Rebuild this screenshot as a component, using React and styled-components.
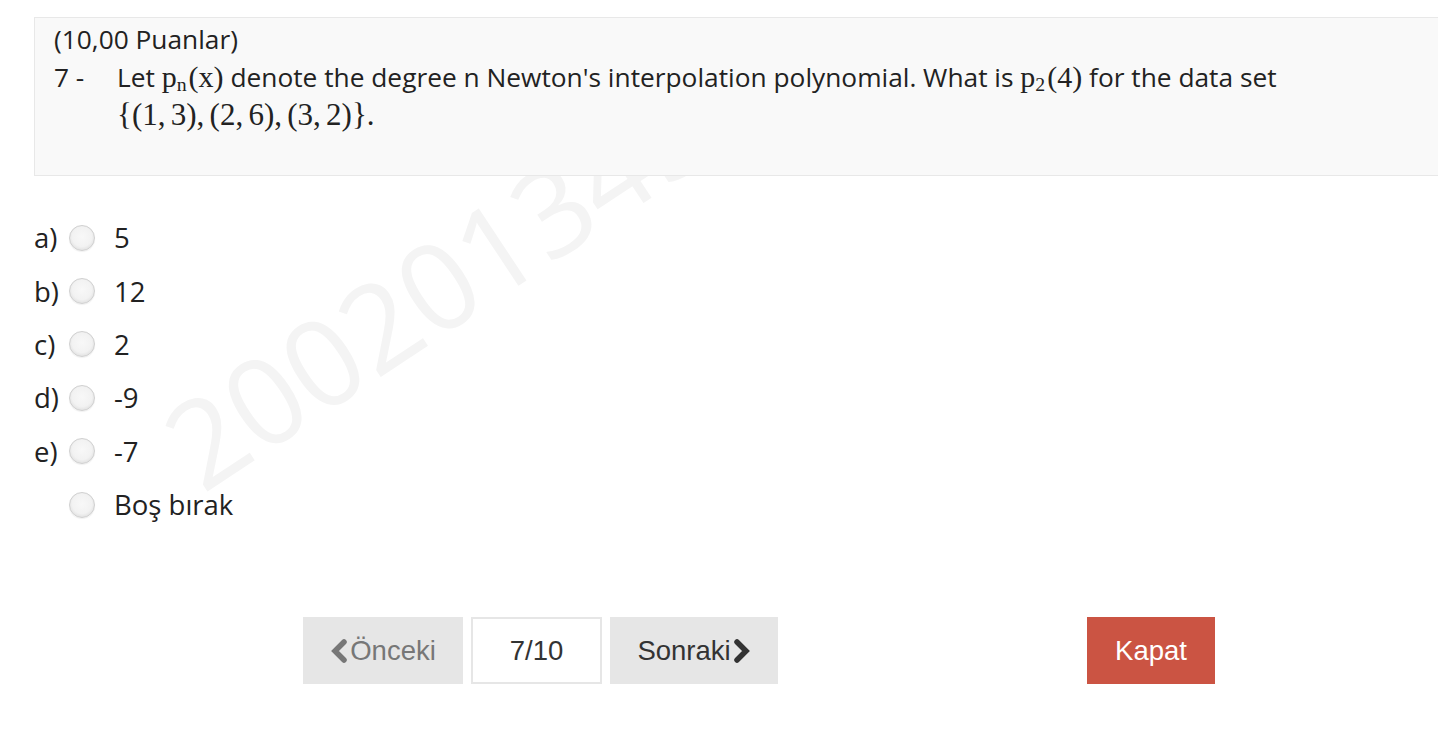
import React from 'react'
import styled, { createGlobalStyle } from 'styled-components'

const GlobalStyle = createGlobalStyle`
  html, body {
    margin: 0;
    padding: 0;
    background: #fff;
  }
  body {
    font-family: 'Open Sans', 'Noto Sans', sans-serif;
    color: #222;
  }
`;

const Page = styled.div`
  position: relative;
  width: 1438px;
  height: 732px;
  overflow: hidden;
  padding: 17px 0 0 34px;
  box-sizing: border-box;
`;

const Watermark = styled.span`
  position: absolute;
  left: 202px;
  top: 388px;
  font-family: 'Open Sans', sans-serif;
  font-size: 121px;
  line-height: 1;
  color: #f4f4f4;
  white-space: nowrap;
  transform-origin: 0 106px;
  transform: rotate(-33.5deg);
  user-select: none;
  z-index: 0;
`;

const Panel = styled.section`
  position: relative;
  z-index: 1;
  width: 1420px;
  height: 159px;
  box-sizing: border-box;
  background: #f9f9f9;
  border: 1px solid #e8e8e8;
  padding: 6px 20px 0 19px;
  font-size: 26.3px;
`;

const Points = styled.div`
  line-height: 30px;
  height: 30px;
  margin-bottom: 4px;
`;

const QuestionRow = styled.div`
  display: flex;
  line-height: 38px;
`;

const QNumber = styled.span`
  flex: 0 0 63px;
`;

const QText = styled.div`
  flex: 1;
  max-width: 1260px;
`;

const Math = styled.span`
  font-family: 'Liberation Serif', 'Times New Roman', serif;
  font-size: ${p => p.$size || 30}px;
  white-space: nowrap;
`;

const Sub = styled.sub`
  font-size: 66%;
  vertical-align: -0.22em;
  line-height: 0;
  margin-right: 2px;
`;

const Comma = styled.span`
  margin-right: ${p => (p.$wide ? '0.17em' : '0')};
`;

const Options = styled.div`
  position: relative;
  z-index: 1;
  margin-top: 35px;
  display: flex;
  flex-direction: column;
`;

const OptionRow = styled.label`
  display: flex;
  align-items: center;
  height: 53.4px;
  font-size: 27.5px;
  color: #222;
`;

const Letter = styled.span`
  width: 35px;
  flex: 0 0 35px;
`;

const Radio = styled.input.attrs({ type: 'radio' })`
  appearance: none;
  -webkit-appearance: none;
  margin: 0;
  width: 26px;
  height: 26px;
  flex: 0 0 26px;
  border-radius: 50%;
  border: 1px solid #d0d0d0;
  box-sizing: border-box;
  background: radial-gradient(circle at 50% 45%, #f8f8f8 0%, #f2f2f2 55%, #e3e3e3 74%, #d6d6d6 100%);
  box-shadow: 0 1px 1px rgba(0, 0, 0, 0.06);
`;

const OptionText = styled.span`
  margin-left: 19px;
`;

const Footer = styled.div`
  position: relative;
  z-index: 1;
  margin-top: 86px;
  display: flex;
  align-items: stretch;
  height: 67px;
  padding-left: 269px;
`;

const NavGroup = styled.div`
  display: flex;
  gap: 8px;
`;

const NavButton = styled.button`
  font-family: 'Liberation Sans', Arial, sans-serif;
  font-size: 27.5px;
  height: 67px;
  width: ${p => p.$w}px;
  border: ${p => (p.$outlined ? '2px solid #e6e6e6' : 'none')};
  background: ${p => (p.$outlined ? '#fff' : '#e6e6e6')};
  color: ${p => (p.$muted ? '#777' : '#333')};
  display: flex;
  align-items: center;
  justify-content: center;
  gap: 2px;
  padding: 0;
  box-sizing: border-box;
  cursor: pointer;
`;

const CloseButton = styled.button`
  margin-left: 309px;
  width: 128px;
  height: 67px;
  border: none;
  background: #cb5443;
  color: #fff;
  font-family: 'Liberation Sans', Arial, sans-serif;
  font-size: 27.5px;
  padding: 0;
  cursor: pointer;
`;

const Chevron = ({ dir }) => (
  <svg width="18" height="24" viewBox="0 0 18 24" aria-hidden="true">
    <path
      d={dir === 'left' ? 'M14 3 L5 12 L14 21' : 'M4 3 L13 12 L4 21'}
      fill="none"
      stroke="currentColor"
      strokeWidth="5.5"
      strokeLinecap="round"
      strokeLinejoin="miter"
    />
  </svg>
);

const options = [
  { letter: 'a)', text: '5' },
  { letter: 'b)', text: '12' },
  { letter: 'c)', text: '2' },
  { letter: 'd)', text: '-9' },
  { letter: 'e)', text: '-7' },
  { letter: '', text: 'Boş bırak' },
];

const pairs = [[1, 3], [2, 6], [3, 2]];

export default function App() {
  return (
    <>
      <GlobalStyle />
      <Page>
        <Watermark>200201345</Watermark>

        <Panel>
          <Points>(10,00 Puanlar)</Points>
          <QuestionRow>
            <QNumber>7 -</QNumber>
            <QText>
              Let <Math>p<Sub>n</Sub>(x)</Math> denote the degree n Newton's interpolation polynomial. What is{' '}
              <Math>p<Sub>2</Sub>(4)</Math> for the data set{' '}
              <Math $size={31}>
                {'{'}
                {pairs.map(([a, b], i) => (
                  <React.Fragment key={i}>
                    ({a}<Comma $wide>,</Comma>{b})
                    {i < pairs.length - 1 && <Comma $wide>,</Comma>}
                  </React.Fragment>
                ))}
                {'}'}.
              </Math>
            </QText>
          </QuestionRow>
        </Panel>

        <Options>
          {options.map((o, i) => (
            <OptionRow key={i}>
              <Letter>{o.letter}</Letter>
              <Radio name="answer" />
              <OptionText>{o.text}</OptionText>
            </OptionRow>
          ))}
        </Options>

        <Footer>
          <NavGroup>
            <NavButton $w={160} $muted>
              <Chevron dir="left" />Önceki
            </NavButton>
            <NavButton $w={131} $outlined>7/10</NavButton>
            <NavButton $w={168}>
              Sonraki<Chevron dir="right" />
            </NavButton>
          </NavGroup>
          <CloseButton>Kapat</CloseButton>
        </Footer>
      </Page>
    </>
  );
}
